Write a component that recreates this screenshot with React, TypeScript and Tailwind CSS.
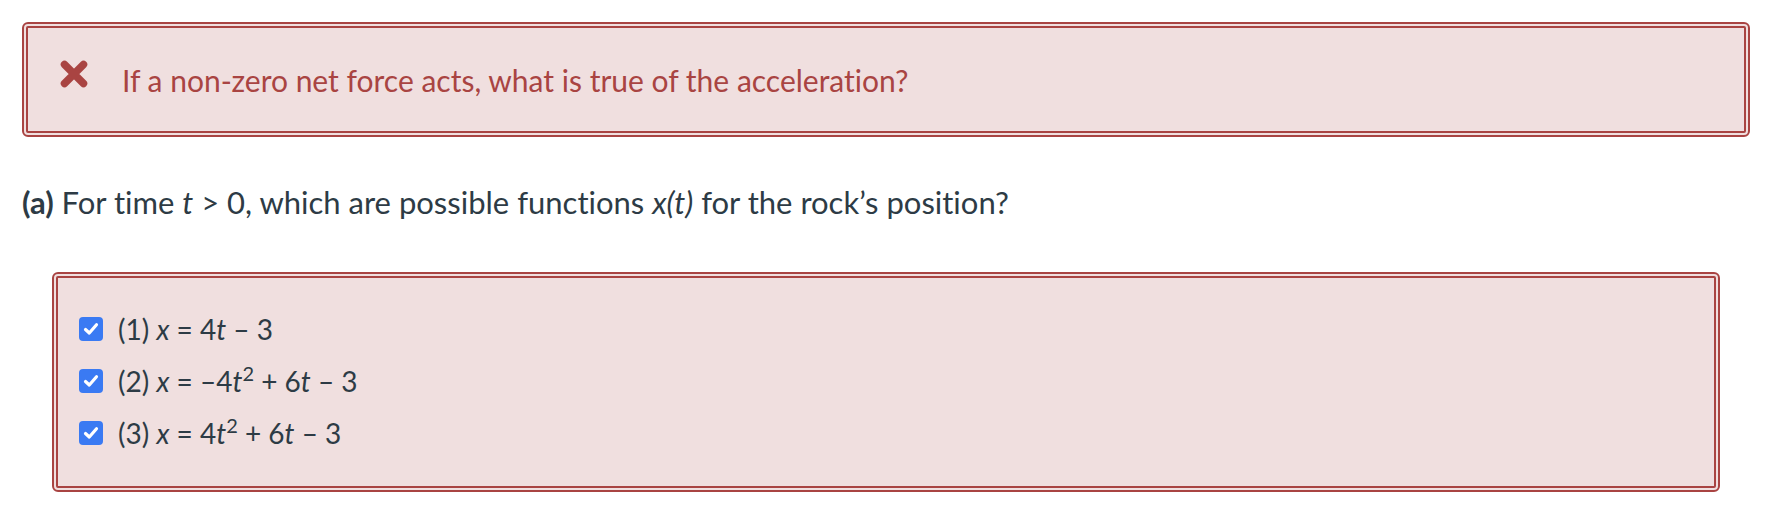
import React from "react";

function XIcon() {
  return (
    <svg width="28" height="28" viewBox="0 0 28 28" className="shrink-0">
      <path d="M4.5 4.5 L23.5 23.5 M23.5 4.5 L4.5 23.5" stroke="#a94442" strokeWidth="7.5" strokeLinecap="round" fill="none" />
    </svg>
  );
}

function Check() {
  return (
    <span className="w-[24px] h-[24px] rounded-[4px] bg-[#3a7af3] flex items-center justify-center shrink-0">
      <svg width="18" height="18" viewBox="0 0 18 18">
        <path d="M3.5 9.5 L7.3 13 L14.5 4.8" stroke="white" strokeWidth="3.2" strokeLinecap="round" strokeLinejoin="round" fill="none" />
      </svg>
    </span>
  );
}

function Sup() {
  return <span className="text-[20px] relative -top-[11px]">2</span>;
}

function Opt({ children }: { children: React.ReactNode }) {
  return (
    <div className="flex items-center h-[52px]">
      <Check />
      <span className="ml-[15px] text-[28px] text-[#2d3b45] leading-none">{children}</span>
    </div>
  );
}

export default function App() {
  return (
    <div className="bg-white w-[1782px] h-[532px] pt-[22px] pl-[22px] pr-[32px] [font-variant-ligatures:none]" style={{ fontFamily: "Lato, 'Noto Sans', sans-serif" }}>
      <div className="h-[115px] border-[6px] border-double border-[#a94442] rounded-[6px] bg-[#f0dfdf] flex items-center pl-[32px]">
        <span className="-mt-[11px]"><XIcon /></span>
        <span className="ml-[34px] text-[30px] text-[#a94442] leading-none">
          If a non-zero net force acts, what is true of the acceleration?
        </span>
      </div>
      <div className="mt-[50px] text-[31px] text-[#2d3b45] leading-none">
        <span className="font-bold">(a)</span> For time <i>t</i> &gt; 0, which are possible functions <i>x(t)</i> for the rock’s position?
      </div>
      <div className="mx-[30px] mt-[54px] h-[220px] border-[6px] border-double border-[#a94442] rounded-[6px] bg-[#f0dfdf] pl-[21px] pt-[25px]">
        <Opt>(1) <i>x</i> = 4<i>t</i> – 3</Opt>
        <Opt>(2) <i>x</i> = –4<i>t</i><Sup /> + 6<i>t</i> – 3</Opt>
        <Opt>(3) <i>x</i> = 4<i>t</i><Sup /> + 6<i>t</i> – 3</Opt>
      </div>
    </div>
  );
}
